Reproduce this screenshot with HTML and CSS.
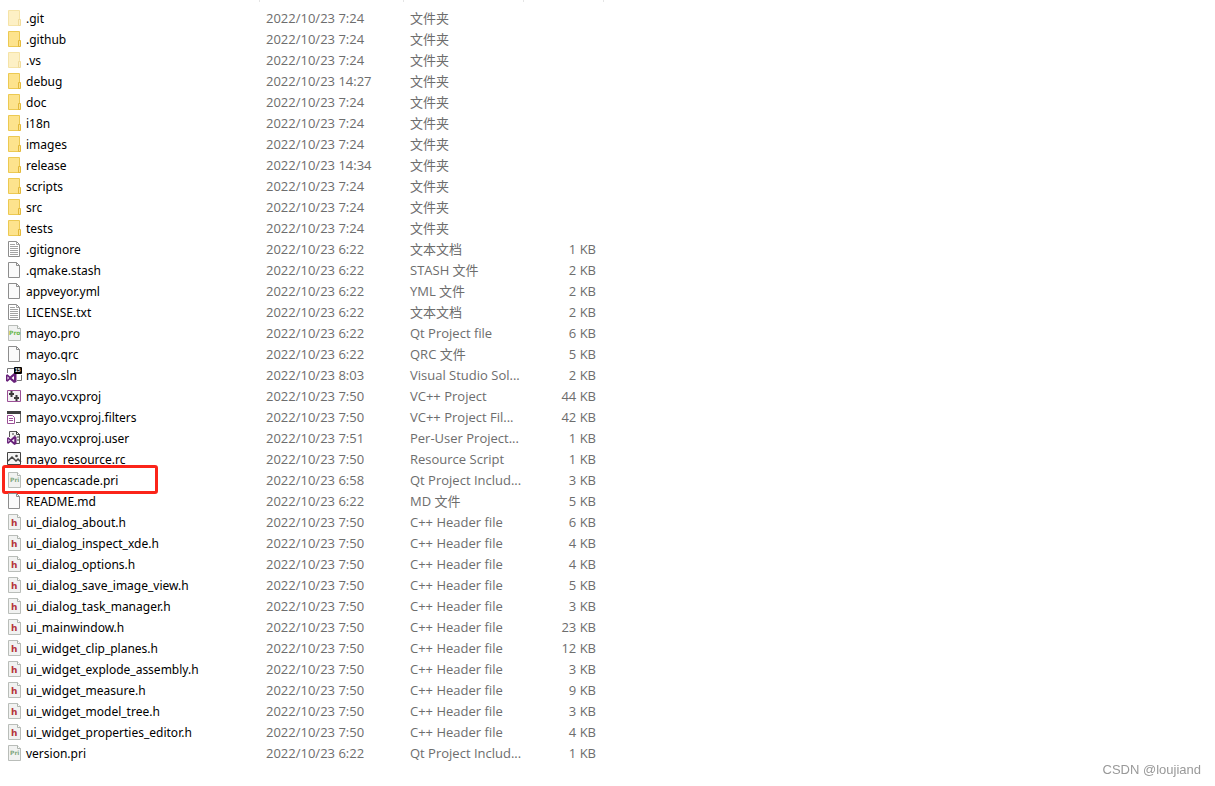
FILE: index.html
```html
<!DOCTYPE html>
<html lang="zh-CN">
  <head>
    <meta charset="UTF-8" />
    <meta name="viewport" content="width=device-width, initial-scale=1.0" />
    <title>mayo</title>
    <link rel="stylesheet" href="styles.css">
  </head>
  <body>
    <!-- icon set -->
    <svg class="sprite" aria-hidden="true">
      <symbol id="folder" viewBox="0 0 16 16">
        <path d="M2.5 .5h11v15h-11z" fill="#fde38d" stroke="#ecc952" />
        <path d="M12.5 9.5h2v6h-2z" fill="#fde38d" stroke="#e3b93b" />
      </symbol>
      <symbol id="page" viewBox="0 0 16 16">
        <path d="M2.5 .5h8l3 3v12h-11z" fill="#fafafa" stroke="#8d8d8d" />
        <path d="M10.5 .5v3h3" fill="none" stroke="#8d8d8d" />
      </symbol>
      <symbol id="text" viewBox="0 0 16 16">
        <path d="M2.5 .5h8l3 3v12h-11z" fill="#fff" stroke="#8d8d8d" />
        <path d="M10.5 .5v3h3M4 3.5h5M4 5.5h8M4 7.5h8M4 9.5h8M4 11.5h8M4 13.5h8" fill="none" stroke="#a3a3a3" />
      </symbol>
      <symbol id="qt-page" viewBox="0 0 16 16">
        <path d="M2.5 .5h9l3 3v12h-12z" fill="#f1f2f1" stroke="#b9bdb9" />
        <path d="M11.5 .5v3h3" fill="#fff" stroke="#adb3ad" />
      </symbol>
      <symbol id="pro" viewBox="0 0 16 16">
        <use href="#qt-page" />
        <text x="3" y="10" class="qt-label">Pro</text>
      </symbol>
      <symbol id="pri" viewBox="0 0 16 16">
        <use href="#qt-page" />
        <text x="4" y="10" class="qt-label qt-label--dim">Pri</text>
      </symbol>
      <symbol id="header" viewBox="0 0 16 16">
        <use href="#qt-page" />
        <text x="5" y="12" class="h-label">h</text>
      </symbol>
      <symbol id="vs-logo" viewBox="0 0 11 10">
        <path fill-rule="evenodd" d="M0 2l1.500-.7L4 3.500 8 0l2.500 1v8L8 10 4 6.500 1.500 8.700 0 8zM1.500 3.300v3.400L3 5zM8 3v4L5.500 5z" fill="#68217a" />
      </symbol>
      <symbol id="sln" viewBox="0 0 16 16">
        <path d="M1.500 6V1.500H8M15.500 8v5.500H11" fill="none" stroke="#777" />
        <use href="#vs-logo" x="0" y="6" width="11" height="10" />
        <rect x="8" width="8" height="7" rx="1" fill="#000" />
        <text x="9" y="5" class="sln-label">15</text>
      </symbol>
      <symbol id="vcxproj" viewBox="0 0 16 16">
        <path d="M1.500 2.500h13v11h-13z" fill="#f2f0f3" stroke="#9b4f96" />
        <path d="M5.500 3v6M3 6h5M10.500 7v6M8 10h5" stroke="#3b3b3b" stroke-width="2" />
      </symbol>
      <symbol id="filters" viewBox="0 0 16 16">
        <path d="M1 2h14v3H1z" fill="#404040" />
        <path d="M14.500 5v8.500H10" fill="none" stroke="#666" />
        <path d="M1.500 6.500h5l2 2v6h-7z" fill="#fff" stroke="#9b4f96" />
        <path d="M3 9.500h4M3 11.500h4" stroke="#9b4f96" />
      </symbol>
      <symbol id="user" viewBox="0 0 16 16">
        <path d="M3.500 7V1.500h7l3 3v9H10" fill="#f4f4f4" stroke="#555" />
        <path d="M10.500 1v3.500H14M6 4h2M8 6h2M11 7h2M11 10h2" fill="none" stroke="#444" />
        <use href="#vs-logo" x="1" y="6" width="10" height="9" />
      </symbol>
      <symbol id="resource" viewBox="0 0 16 16">
        <path d="M1.500 1.500h13v12h-13z" fill="#f4f4f4" stroke="#444" />
        <path d="M2 10l4-4 4 4 2-2 3 3" fill="none" stroke="#444" stroke-width="1.500" />
        <circle cx="10.500" cy="5" r="1.300" fill="#444" />
      </symbol>
    </svg>

    <table class="files">
      <colgroup>
        <col class="col-name">
        <col class="col-date">
        <col class="col-type">
        <col class="col-size">
      </colgroup>
      <thead>
        <tr><th></th><th></th><th></th><th></th></tr>
      </thead>
      <tbody>
        <tr><td><div class="name name--hidden"><svg><use href="#folder" /></svg>.git</div></td><td>2022/10/23 7:24</td><td>文件夹</td><td></td></tr>
        <tr><td><div class="name"><svg><use href="#folder" /></svg>.github</div></td><td>2022/10/23 7:24</td><td>文件夹</td><td></td></tr>
        <tr><td><div class="name name--hidden"><svg><use href="#folder" /></svg>.vs</div></td><td>2022/10/23 7:24</td><td>文件夹</td><td></td></tr>
        <tr><td><div class="name"><svg><use href="#folder" /></svg>debug</div></td><td>2022/10/23 14:27</td><td>文件夹</td><td></td></tr>
        <tr><td><div class="name"><svg><use href="#folder" /></svg>doc</div></td><td>2022/10/23 7:24</td><td>文件夹</td><td></td></tr>
        <tr><td><div class="name"><svg><use href="#folder" /></svg>i18n</div></td><td>2022/10/23 7:24</td><td>文件夹</td><td></td></tr>
        <tr><td><div class="name"><svg><use href="#folder" /></svg>images</div></td><td>2022/10/23 7:24</td><td>文件夹</td><td></td></tr>
        <tr><td><div class="name"><svg><use href="#folder" /></svg>release</div></td><td>2022/10/23 14:34</td><td>文件夹</td><td></td></tr>
        <tr><td><div class="name"><svg><use href="#folder" /></svg>scripts</div></td><td>2022/10/23 7:24</td><td>文件夹</td><td></td></tr>
        <tr><td><div class="name"><svg><use href="#folder" /></svg>src</div></td><td>2022/10/23 7:24</td><td>文件夹</td><td></td></tr>
        <tr><td><div class="name"><svg><use href="#folder" /></svg>tests</div></td><td>2022/10/23 7:24</td><td>文件夹</td><td></td></tr>
        <tr><td><div class="name"><svg><use href="#text" /></svg>.gitignore</div></td><td>2022/10/23 6:22</td><td>文本文档</td><td>1 KB</td></tr>
        <tr><td><div class="name"><svg><use href="#page" /></svg>.qmake.stash</div></td><td>2022/10/23 6:22</td><td>STASH 文件</td><td>2 KB</td></tr>
        <tr><td><div class="name"><svg><use href="#page" /></svg>appveyor.yml</div></td><td>2022/10/23 6:22</td><td>YML 文件</td><td>2 KB</td></tr>
        <tr><td><div class="name"><svg><use href="#text" /></svg>LICENSE.txt</div></td><td>2022/10/23 6:22</td><td>文本文档</td><td>2 KB</td></tr>
        <tr><td><div class="name"><svg><use href="#pro" /></svg>mayo.pro</div></td><td>2022/10/23 6:22</td><td>Qt Project file</td><td>6 KB</td></tr>
        <tr><td><div class="name"><svg><use href="#page" /></svg>mayo.qrc</div></td><td>2022/10/23 6:22</td><td>QRC 文件</td><td>5 KB</td></tr>
        <tr><td><div class="name"><svg><use href="#sln" /></svg>mayo.sln</div></td><td>2022/10/23 8:03</td><td>Visual Studio Sol...</td><td>2 KB</td></tr>
        <tr><td><div class="name"><svg><use href="#vcxproj" /></svg>mayo.vcxproj</div></td><td>2022/10/23 7:50</td><td>VC++ Project</td><td>44 KB</td></tr>
        <tr><td><div class="name"><svg><use href="#filters" /></svg>mayo.vcxproj.filters</div></td><td>2022/10/23 7:50</td><td>VC++ Project Fil...</td><td>42 KB</td></tr>
        <tr><td><div class="name"><svg><use href="#user" /></svg>mayo.vcxproj.user</div></td><td>2022/10/23 7:51</td><td>Per-User Project...</td><td>1 KB</td></tr>
        <tr><td><div class="name"><svg><use href="#resource" /></svg>mayo_resource.rc</div></td><td>2022/10/23 7:50</td><td>Resource Script</td><td>1 KB</td></tr>
        <tr><td><div class="name name--marked"><svg><use href="#pri" /></svg>opencascade.pri</div></td><td>2022/10/23 6:58</td><td>Qt Project Includ...</td><td>3 KB</td></tr>
        <tr><td><div class="name"><svg><use href="#page" /></svg>README.md</div></td><td>2022/10/23 6:22</td><td>MD 文件</td><td>5 KB</td></tr>
        <tr><td><div class="name"><svg><use href="#header" /></svg>ui_dialog_about.h</div></td><td>2022/10/23 7:50</td><td>C++ Header file</td><td>6 KB</td></tr>
        <tr><td><div class="name"><svg><use href="#header" /></svg>ui_dialog_inspect_xde.h</div></td><td>2022/10/23 7:50</td><td>C++ Header file</td><td>4 KB</td></tr>
        <tr><td><div class="name"><svg><use href="#header" /></svg>ui_dialog_options.h</div></td><td>2022/10/23 7:50</td><td>C++ Header file</td><td>4 KB</td></tr>
        <tr><td><div class="name"><svg><use href="#header" /></svg>ui_dialog_save_image_view.h</div></td><td>2022/10/23 7:50</td><td>C++ Header file</td><td>5 KB</td></tr>
        <tr><td><div class="name"><svg><use href="#header" /></svg>ui_dialog_task_manager.h</div></td><td>2022/10/23 7:50</td><td>C++ Header file</td><td>3 KB</td></tr>
        <tr><td><div class="name"><svg><use href="#header" /></svg>ui_mainwindow.h</div></td><td>2022/10/23 7:50</td><td>C++ Header file</td><td>23 KB</td></tr>
        <tr><td><div class="name"><svg><use href="#header" /></svg>ui_widget_clip_planes.h</div></td><td>2022/10/23 7:50</td><td>C++ Header file</td><td>12 KB</td></tr>
        <tr><td><div class="name"><svg><use href="#header" /></svg>ui_widget_explode_assembly.h</div></td><td>2022/10/23 7:50</td><td>C++ Header file</td><td>3 KB</td></tr>
        <tr><td><div class="name"><svg><use href="#header" /></svg>ui_widget_measure.h</div></td><td>2022/10/23 7:50</td><td>C++ Header file</td><td>9 KB</td></tr>
        <tr><td><div class="name"><svg><use href="#header" /></svg>ui_widget_model_tree.h</div></td><td>2022/10/23 7:50</td><td>C++ Header file</td><td>3 KB</td></tr>
        <tr><td><div class="name"><svg><use href="#header" /></svg>ui_widget_properties_editor.h</div></td><td>2022/10/23 7:50</td><td>C++ Header file</td><td>4 KB</td></tr>
        <tr><td><div class="name"><svg><use href="#pri" /></svg>version.pri</div></td><td>2022/10/23 6:22</td><td>Qt Project Includ...</td><td>1 KB</td></tr>
      </tbody>
    </table>

    <div class="watermark">CSDN @loujiand</div>
  </body>
</html>
```
FILE: styles.css
```css
body {
  margin: 0;
  background-color: #fff;
  font-family: "Open Sans", "Noto Sans CJK SC", sans-serif;
  font-size: 13px;
  line-height: 21px;
  color: #6d6d6d;
}

.sprite {
  display: none;
}

/* file list */
.files {
  table-layout: fixed;
  width: 604px;
  border-collapse: collapse;
}

.col-name {
  width: 260px;
}

.col-date {
  width: 144px;
}

.col-type {
  width: 120px;
}

.col-size {
  width: 80px;
}

/* column dividers */
.files th {
  height: 8px;
  padding: 0;
  background: linear-gradient(#e5e5e5, #e5e5e5) no-repeat right top / 1px 2px;
}

.files td {
  height: 21px;
  padding: 0 0 0 6px;
  white-space: nowrap;
}

.files td:last-child {
  padding-right: 8px;
  text-align: right;
}

.name {
  position: relative;
  display: flex;
  gap: 4px;
  font-family: "Noto Sans", sans-serif;
  font-size: 12px;
  color: #000;
}

.name svg {
  flex: none;
  width: 16px;
  height: 16px;
  margin-top: 2px;
}

.name--hidden svg {
  opacity: 0.5;
}

/* red frame around the file */
.name--marked::after {
  content: "";
  position: absolute;
  top: -5px;
  left: -4px;
  box-sizing: border-box;
  width: 156px;
  height: 29px;
  border: 3px solid #fb2419;
  border-radius: 3px;
}

/* labels inside icons */
.qt-label {
  font: bold 6px "DejaVu Sans", sans-serif;
  fill: #6cb84c;
}

.qt-label--dim {
  fill: #7fa77f;
}

.h-label {
  font: bold 9px "DejaVu Sans", sans-serif;
  fill: #b5333a;
}

.sln-label {
  font: bold 5px "Liberation Sans", sans-serif;
  fill: #fff;
}

.watermark {
  position: fixed;
  right: 14px;
  bottom: 8px;
  font-family: "Liberation Sans", Arial, sans-serif;
  font-size: 13px;
  line-height: 16px;
  color: #999;
}
```
